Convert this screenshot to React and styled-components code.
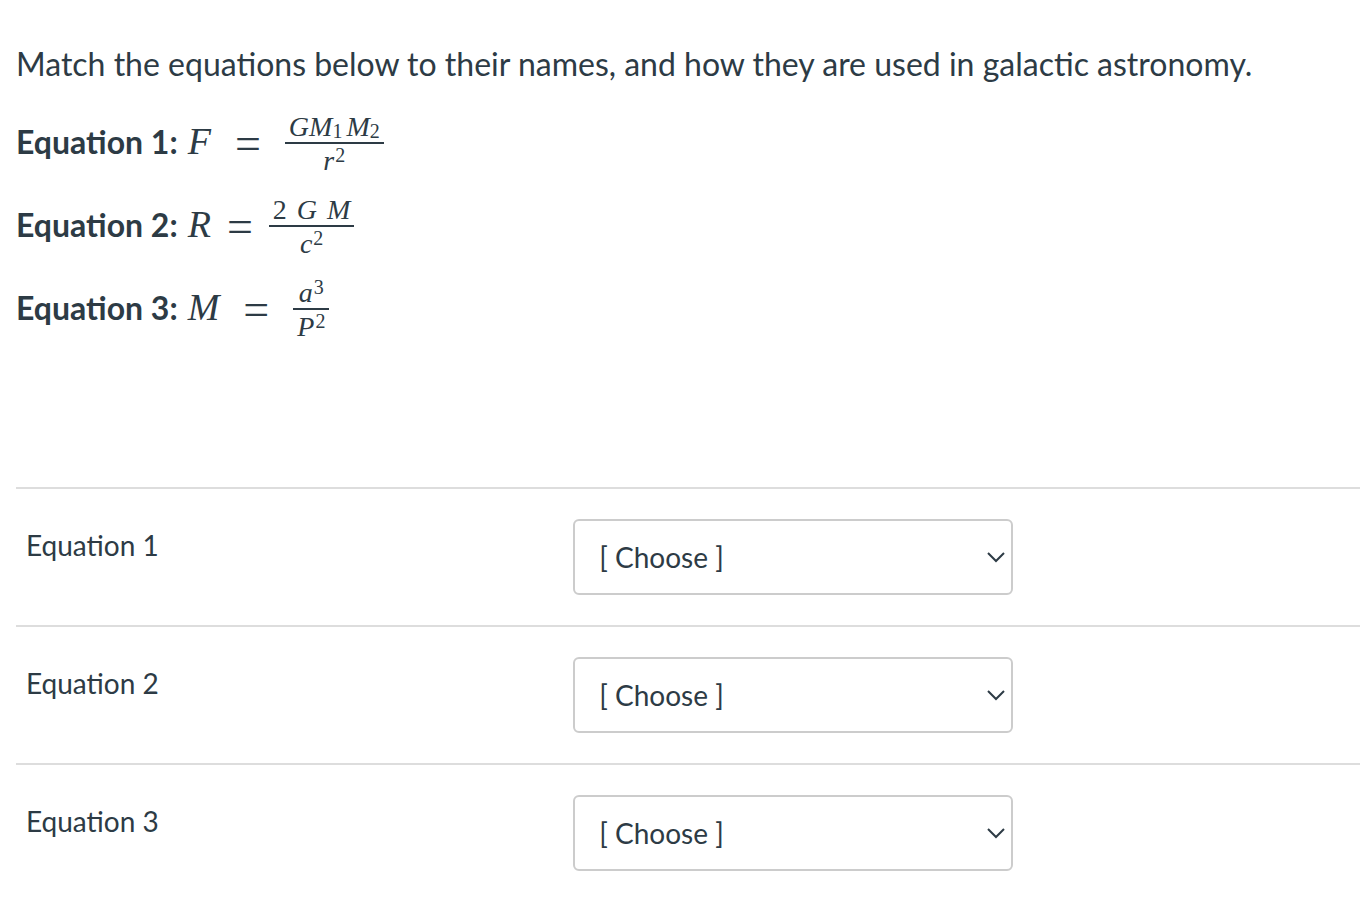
import React, { useState } from 'react';
import styled, { createGlobalStyle } from 'styled-components';

const GlobalStyle = createGlobalStyle`
  * {
    box-sizing: border-box;
  }

  body {
    margin: 0;
    background: #fff;
    color: #2d3b45;
    font-family: Lato, sans-serif;
  }
`;

const Question = styled.main`
  padding: 40px 0 20px 16px;
`;

const Prompt = styled.p`
  margin: 0;
  font-size: 32px;
  line-height: 48px;
`;

const EquationList = styled.div`
  display: flex;
  flex-direction: column;
  gap: 19px;
  margin-top: 24px;
`;

const Equation = styled.div`
  display: flex;
  align-items: center;
  height: 64px;
`;

const Statement = styled.div`
  display: flex;
  align-items: baseline;
  padding-bottom: 6px;
`;

const EquationName = styled.strong`
  margin-right: 10px;
  font-size: 32px;
`;

const Variable = styled.i`
  font-family: 'Liberation Serif', serif;
  font-size: 38px;
  line-height: 44px;
`;

const Equals = styled.span`
  margin: 0 ${(props) => (props.$wide ? '24px' : '16px')};
  font-family: 'Liberation Serif', serif;
  font-size: 46px;
  line-height: 64px;
`;

const Fraction = styled.div`
  display: flex;
  flex-direction: column;
  font-family: 'Liberation Serif', serif;
  font-size: 28px;
  line-height: 30px;
`;

const Numerator = styled.div`
  display: flex;
  justify-content: center;
  gap: ${(props) => (props.$spaced ? '10px' : '0')};
  height: 32px;
  padding: 0 4px;
  border-bottom: 2px solid #2d3b45;
`;

const Denominator = styled.div`
  display: flex;
  justify-content: center;
  height: 32px;
  padding: 2px 4px 0;
`;

const Term = styled.span`
  sub,
  sup {
    font-size: 20px;
    line-height: 0;
  }

  sub {
    margin-right: 4px;
    vertical-align: -2px;
  }

  sup {
    margin-left: 1px;
    vertical-align: 8px;
  }

  &:last-child sub {
    margin-right: 0;
  }
`;

const Answers = styled.div`
  margin-top: 145px;
`;

const AnswerRow = styled.div`
  display: grid;
  grid-template-columns: 31fr 44fr;
  padding: 30px 10px;
  border-top: 2px solid #ddd;
`;

const AnswerLabel = styled.label`
  padding-top: 8px;
  font-size: 28px;
  line-height: 36px;
`;

const SelectBox = styled.div`
  position: relative;
  width: 440px;
  max-width: 100%;
`;

const Select = styled.select`
  display: block;
  width: 100%;
  height: 76px;
  padding: 0 48px 0 24px;
  appearance: none;
  border: 2px solid #ccc;
  border-radius: 6px;
  background: #fff;
  color: inherit;
  font-family: inherit;
  font-size: 28px;
`;

const Chevron = styled.svg`
  position: absolute;
  top: 32px;
  right: 8px;
  pointer-events: none;
`;

const names = ['Equation 1', 'Equation 2', 'Equation 3'];

const Answer = ({ id, name }) => {
  const [value, setValue] = useState('');

  return (
    <AnswerRow>
      <AnswerLabel htmlFor={id}>{name}</AnswerLabel>
      <SelectBox>
        <Select id={id} value={value} onChange={(e) => setValue(e.target.value)}>
          <option value="">[ Choose ]</option>
        </Select>
        <Chevron width="18" height="12" viewBox="0 0 18 12" fill="none" aria-hidden="true">
          <path d="M1 2L9 10L17 2" stroke="#2d3b45" strokeWidth="2" />
        </Chevron>
      </SelectBox>
    </AnswerRow>
  );
};

const App = () => (
  <>
    <GlobalStyle />
    <Question>
      <Prompt>
        Match the equations below to their names, and how they are used in galactic astronomy.
      </Prompt>
      <EquationList>
        <Equation>
          <Statement>
            <EquationName>Equation 1:</EquationName>
            <Variable>F</Variable>
          </Statement>
          <Equals $wide>=</Equals>
          <Fraction>
            <Numerator>
              <Term><i>G</i></Term>
              <Term><i>M</i><sub>1</sub></Term>
              <Term><i>M</i><sub>2</sub></Term>
            </Numerator>
            <Denominator>
              <Term><i>r</i><sup>2</sup></Term>
            </Denominator>
          </Fraction>
        </Equation>
        <Equation>
          <Statement>
            <EquationName>Equation 2:</EquationName>
            <Variable>R</Variable>
          </Statement>
          <Equals>=</Equals>
          <Fraction>
            <Numerator $spaced>
              <Term>2</Term>
              <Term><i>G</i></Term>
              <Term><i>M</i></Term>
            </Numerator>
            <Denominator>
              <Term><i>c</i><sup>2</sup></Term>
            </Denominator>
          </Fraction>
        </Equation>
        <Equation>
          <Statement>
            <EquationName>Equation 3:</EquationName>
            <Variable>M</Variable>
          </Statement>
          <Equals $wide>=</Equals>
          <Fraction>
            <Numerator>
              <Term><i>a</i><sup>3</sup></Term>
            </Numerator>
            <Denominator>
              <Term><i>P</i><sup>2</sup></Term>
            </Denominator>
          </Fraction>
        </Equation>
      </EquationList>
      <Answers>
        {names.map((name, index) => (
          <Answer key={name} id={`answer-${index + 1}`} name={name} />
        ))}
      </Answers>
    </Question>
  </>
);

export default App;
